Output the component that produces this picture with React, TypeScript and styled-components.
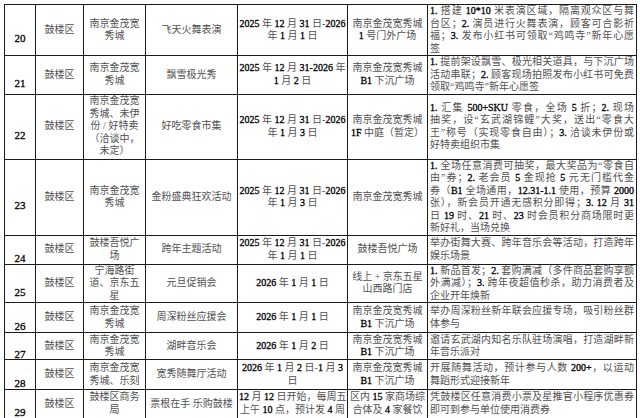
import React from "react"
import styled, { createGlobalStyle } from "styled-components"

const GlobalStyle = createGlobalStyle`
    body {
        margin: 0;
        background: #fff;
    }
`

const Page = styled.div`
    padding: 4px 0 0 4px;
`

const Sheet = styled.table`
    border-collapse: collapse;
    table-layout: fixed;
    width: 632px;
    font-family: "Liberation Serif", "Noto Sans CJK SC", serif;
    font-size: 10px;
    line-height: 12.5px;
    color: #505050;
    border-bottom: 2px solid #111;
`

const Row = styled.tr<{ $h: number }>`
    height: ${(p) => p.$h}px;
`

const Cell = styled.td`
    border: 1px solid #1a1a1a;
    padding: 0 1px;
    vertical-align: middle;
    text-align: center;
    white-space: nowrap;
`

const NumText = styled.span`
    display: inline-block;
    font-size: 11px;
    color: #000;
    -webkit-text-stroke: 0.3px #000;
    transform: translateY(9px);
`

const DescCell = styled(Cell)`
    padding: 0 2px;
    text-align: left;
`

const Line = styled.div<{ $full?: boolean }>`
    text-align-last: ${(p) => (p.$full ? "justify" : "auto")};
`

const Latin = styled.span`
    color: #000;
    -webkit-text-stroke: 0.3px #000;
`

type Item = {
    no: number
    h: number
    place: string
    what: string
    date: string
    where: string
    desc: string[]
}

const items: Item[] = [
    {
        no: 20,
        h: 51,
        place: "南京金茂宽\n秀城",
        what: "飞天火舞表演",
        date: "2025 年 12 月 31 日-2026\n年 1 月 1 日",
        where: "南京金茂宽秀城\n1 号门外广场",
        desc: [
            "1. 搭建 10*10 米表演区域，隔离观众区与舞",
            "台区；2. 演员进行火舞表演，顾客可合影祈",
            "福；3. 发布小红书可领取“鸡鸣寺”新年心愿",
            "签",
        ],
    },
    {
        no: 21,
        h: 37,
        place: "南京金茂宽\n秀城",
        what: "飘雪极光秀",
        date: "2025 年 12 月 31-2026 年\n1 月 2 日",
        where: "南京金茂宽秀城\nB1 下沉广场",
        desc: [
            "1. 提前架设飘雪、极光相关道具，与下沉广场",
            "活动串联；2. 顾客现场拍照发布小红书可免费",
            "领取“鸡鸣寺”新年心愿签",
        ],
    },
    {
        no: 22,
        h: 65,
        place: "南京金茂宽\n秀城、未伊\n份 / 好特卖\n（洽谈中，\n未定）",
        what: "好吃零食市集",
        date: "2025 年 12 月 31 日-2026\n年 1 月 3 日",
        where: "南京金茂宽秀城\n1F 中庭（暂定）",
        desc: [
            "1. 汇集 500+SKU 零食，全场 5 折；2. 现场",
            "抽奖，设“玄武湖锦鲤”大奖，送出“零食大",
            "王”称号（实现零食自由）；3. 洽谈未伊份或",
            "好特卖组织市集",
        ],
    },
    {
        no: 23,
        h: 76,
        place: "南京金茂宽\n秀城",
        what: "金粉盛典狂欢活动",
        date: "2025 年 12 月 31 日-2026\n年 1 月 3 日",
        where: "南京金茂宽秀城",
        desc: [
            "1. 全场任意消费可抽奖，最大奖品为“零食自",
            "由”券；2. 老会员 5 金现抢 5 元无门槛代金",
            "券（B1 全场通用，12.31-1.1 使用，预算 2000",
            "张），新会员开通无感积分即得；3. 12 月 31",
            "日 19 时、21 时、23 时会员积分商场限时更",
            "新好礼，当场兑换",
        ],
    },
    {
        no: 24,
        h: 29,
        place: "鼓楼吾悦广\n场",
        what: "跨年主题活动",
        date: "2025 年 12 月 31 日-2026\n年 1 月 1 日",
        where: "鼓楼吾悦广场",
        desc: ["举办街舞大赛、跨年音乐会等活动，打造跨年", "娱乐场景"],
    },
    {
        no: 25,
        h: 38,
        place: "宁海路街\n道、京东五\n星",
        what: "元旦促销会",
        date: "2026 年 1 月 1 日",
        where: "线上 + 京东五星\n山西路门店",
        desc: [
            "1. 新品首发；2. 套购满减（多件商品套购享额",
            "外满减）；3. 跨年夜超值秒杀，助力消费者及",
            "企业开年焕新",
        ],
    },
    {
        no: 26,
        h: 30,
        place: "南京金茂宽\n秀城",
        what: "周深粉丝应援会",
        date: "2026 年 1 月 1 日",
        where: "南京金茂宽秀城\nB1 下沉广场",
        desc: ["举办周深粉丝新年联会应援专场，吸引粉丝群", "体参与"],
    },
    {
        no: 27,
        h: 27,
        place: "南京金茂宽\n秀城",
        what: "湖畔音乐会",
        date: "2026 年 1 月 2 日",
        where: "南京金茂宽秀城\nB1 下沉广场",
        desc: ["邀请玄武湖内知名乐队驻场演唱，打造湖畔新", "年音乐派对"],
    },
    {
        no: 28,
        h: 30,
        place: "南京金茂宽\n秀城、乐刻",
        what: "宽秀随舞厅活动",
        date: "2026 年 1 月 2 日-1 月 3\n日",
        where: "南京金茂宽秀城\nB1 下沉广场",
        desc: ["开展随舞活动，预计参与人数 200+，以运动", "舞蹈形式迎接新年"],
    },
    {
        no: 29,
        h: 29,
        place: "鼓楼区商务\n局",
        what: "票根在手 乐购鼓楼",
        date: "12 月 12 日开始，每周五\n上午 10 点，预计发 4 周",
        where: "区内 15 家商场综\n合体及 4 家餐饮",
        desc: ["凭鼓楼区任意消费小票及星推官小程序优惠券", "即可到参与单位使用消费券"],
    },
]

// numbers and latin words print darker in the source doc
const rich = (text: string) =>
    text.split(/([0-9A-Za-z][0-9A-Za-z.*+\-]*)/).map((part, i) =>
        i % 2 === 1 ? <Latin key={i}>{part}</Latin> : part
    )

const Lines = ({ text }: { text: string }) => (
    <>
        {text.split("\n").map((l, i) => (
            <Line key={i}>{rich(l)}</Line>
        ))}
    </>
)

export default function App() {
    return (
        <Page>
            <GlobalStyle />
            <Sheet>
                <colgroup>
                    <col style={{ width: 31 }} />
                    <col style={{ width: 48 }} />
                    <col style={{ width: 62 }} />
                    <col style={{ width: 92 }} />
                    <col style={{ width: 110 }} />
                    <col style={{ width: 80 }} />
                    <col style={{ width: 209 }} />
                </colgroup>
                <tbody>
                    {items.map((it) => (
                        <Row key={it.no} $h={it.h}>
                            <Cell>
                                <NumText>{it.no}</NumText>
                            </Cell>
                            <Cell>鼓楼区</Cell>
                            <Cell>
                                <Lines text={it.place} />
                            </Cell>
                            <Cell>
                                <Lines text={it.what} />
                            </Cell>
                            <Cell>
                                <Lines text={it.date} />
                            </Cell>
                            <Cell>
                                <Lines text={it.where} />
                            </Cell>
                            <DescCell>
                                {it.desc.map((l, i) => (
                                    <Line key={i} $full={i < it.desc.length - 1}>
                                        {rich(l)}
                                    </Line>
                                ))}
                            </DescCell>
                        </Row>
                    ))}
                </tbody>
            </Sheet>
        </Page>
    )
}
